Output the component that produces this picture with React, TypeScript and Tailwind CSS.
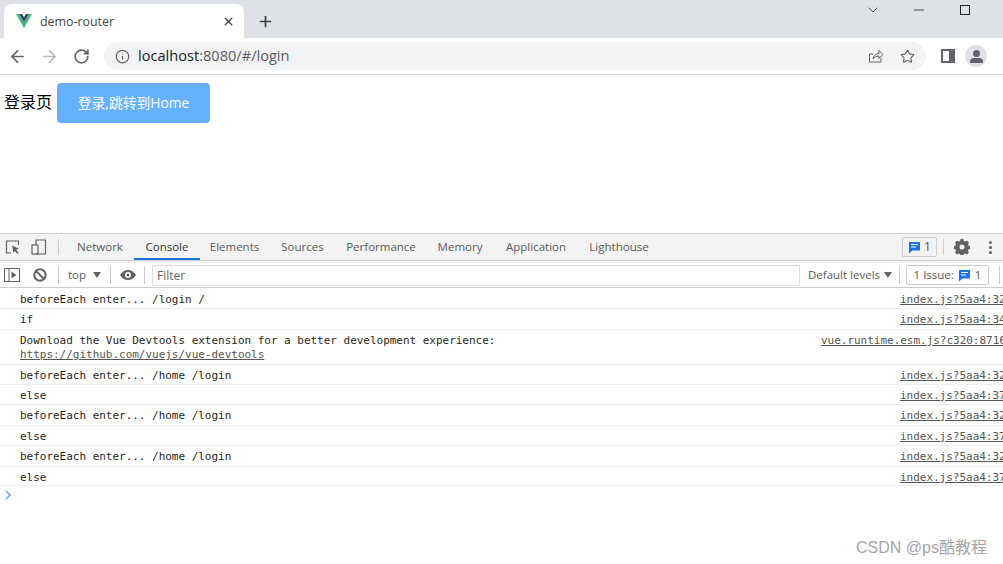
import { ArrowLeft, ArrowRight, ChevronDown, Info, Minus, Plus, RotateCw, Star, X } from "lucide-react";

const UI_FONT = "font-['Open_Sans','Noto_Sans_CJK_SC',sans-serif]";

const ROWS = [
  { text: "beforeEach enter... /login /", src: "index.js?5aa4:32", h: "h-[21px]" },
  { text: "if", src: "index.js?5aa4:34", h: "h-[21px]" },
  { text: "", src: "vue.runtime.esm.js?c320:8716", h: "h-[35px]", download: true },
  { text: "beforeEach enter... /home /login", src: "index.js?5aa4:32", h: "h-[20px]" },
  { text: "else", src: "index.js?5aa4:37", h: "h-[20px]" },
  { text: "beforeEach enter... /home /login", src: "index.js?5aa4:32", h: "h-[21px]" },
  { text: "else", src: "index.js?5aa4:37", h: "h-[20px]" },
  { text: "beforeEach enter... /home /login", src: "index.js?5aa4:32", h: "h-[21px]" },
  { text: "else", src: "index.js?5aa4:37", h: "h-[19px]" },
];

const TABS = [
  { label: "Network", w: "w-[68px]" },
  { label: "Console", w: "w-[66px]", active: true },
  { label: "Elements", w: "w-[69px]" },
  { label: "Sources", w: "w-[67px]" },
  { label: "Performance", w: "w-[90px]" },
  { label: "Memory", w: "w-[68px]" },
  { label: "Application", w: "w-[84px]" },
  { label: "Lighthouse", w: "w-[82px]" },
];

function Bubble() {
  return (
    <svg width="13" height="13" viewBox="0 0 13 13">
      <path d="M1 1h11v8.500H4.500L1 12.500z" fill="#1a73e8" />
      <path d="M3 3.500h7M3 6h5" stroke="#fff" strokeWidth="1.200" />
    </svg>
  );
}

function VueLogo() {
  return (
    <svg width="16" height="14" viewBox="0 0 16 14">
      <path d="M0 0h3.200L8 8.200 12.800 0H16L8 14z" fill="#41b883" />
      <path d="M3.200 0h2.900L8 3.300 9.900 0h2.900L8 8.200z" fill="#35495e" />
    </svg>
  );
}

function Divider() {
  return <div className="h-[18px] w-px bg-[#ccc]" />;
}

function Caret() {
  return <div className="h-0 w-0 border-x-[4px] border-t-[6px] border-x-transparent border-t-[#5f6368]" />;
}

export default function App() {
  return (
    <div className={`relative flex h-[564px] w-[1003px] flex-col overflow-hidden bg-white ${UI_FONT}`}>
      {/* Tab strip */}
      <div className="flex h-[38px] shrink-0 items-end bg-[#dee1e6] pl-[4px]">
        <div className="flex h-[34px] w-[240px] items-center rounded-t-[8px] bg-white pl-[12px] pr-[9px]">
          <VueLogo />
          <span className="ml-[8px] pt-[2px] text-[12.4px] text-[#45494d]">demo-router</span>
          <X className="ml-auto size-[13px] text-[#45494d]" strokeWidth={2.6} />
        </div>
        <div className="ml-[13px] flex h-[34px] items-center">
          <Plus className="size-[17px] text-[#3c4043]" strokeWidth={2.4} />
        </div>
        <div className="ml-auto flex h-[38px] items-start">
          <ChevronDown className="mt-[2px] size-[16px] text-[#3c4043]" strokeWidth={1.3} />
          <Minus className="ml-[30px] mt-[2px] size-[16px] text-[#222]" strokeWidth={1.2} />
          <div className="ml-[33px] mr-[33px] mt-[5px] size-[10px] border border-[#222]" />
        </div>
      </div>

      {/* Toolbar */}
      <div className="flex h-[37px] shrink-0 items-center border-b border-[#d4d5d7] bg-white">
        <ArrowLeft className="ml-[8px] size-[19px] text-[#5f6368]" strokeWidth={2.2} />
        <ArrowRight className="ml-[13px] size-[19px] text-[#b8babc]" strokeWidth={2.2} />
        <RotateCw className="ml-[14px] size-[17px] text-[#5f6368]" strokeWidth={2.4} />
        <div className="ml-[14px] flex h-[28px] w-[822px] items-center rounded-full bg-[#f1f3f4] pl-[11px] pr-[11px]">
          <Info className="size-[15px] text-[#5f6368]" strokeWidth={2} />
          <span className="ml-[8px] text-[14.6px] text-[#5a5c5f]">
            <span className="text-[#202124]">localhost</span>:8080/#/login
          </span>
          <svg className="ml-auto" width="16" height="16" viewBox="0 0 16 16" fill="none" stroke="#5f6368" strokeWidth="1">
            <path d="M13 10v4H1.500V6H5M5 11c.6-3.500 3-5.500 6-5.500V2.500L15 6.500l-4 4V8c-2.500 0-4.500.8-6 3z" />
          </svg>
          <Star className="ml-[16px] size-[15px] text-[#5f6368]" strokeWidth={1.8} />
        </div>
        <div className="ml-[15px] flex h-[14px] w-[14px] justify-end border-2 border-[#5f6368] bg-white">
          <div className="w-[4px] bg-[#5f6368]" />
        </div>
        <div className="ml-[10px] flex size-[22px] flex-col items-center justify-center rounded-full bg-[#dee1e6]">
          <div className="size-[7px] rounded-full bg-[#5f6368]" />
          <div className="mt-[1px] h-[5px] w-[13px] rounded-t-[4px] bg-[#5f6368]" />
        </div>
      </div>

      {/* Page */}
      <div className="flex h-[158px] shrink-0 items-start pl-[4px] pt-[8px]">
        <span className="mt-[10px] text-[16px] leading-[18px] text-black">登录页</span>
        <button
          type="button"
          className="ml-[5px] h-[40px] w-[153px] rounded-[4px] bg-[#66b1ff] text-[13.8px] text-white"
        >
          登录,跳转到Home
        </button>
      </div>

      {/* Devtools tabs */}
      <div className="flex h-[28px] shrink-0 items-center border-y border-[#cbcdd0] bg-[#f3f3f3] text-[11.5px] text-[#5a5a5a]">
        <svg className="ml-[5px]" width="16" height="16" viewBox="0 0 16 16" fill="none">
          <path d="M6 14H1.500V2h12v4" stroke="#5f6368" strokeWidth="1.200" />
          <path d="M7 6.500l7 3.200-3 1.100 2.500 2.700-1.300 1.200-2.400-2.800L8.500 14z" fill="#5f6368" />
        </svg>
        <svg className="ml-[10px]" width="16" height="16" viewBox="0 0 16 16" fill="none" stroke="#5f6368" strokeWidth="1.200">
          <path d="M5 6V1h9.500v14H5" />
          <rect x="1" y="6" width="6" height="9" />
        </svg>
        <div className="ml-[11px] mr-[7px] h-[16px] w-px bg-[#ccc]" />
        {TABS.map((t) => (
          <div
            key={t.label}
            className={`flex h-[26px] items-center justify-center ${t.w} ${
              t.active ? "border-b-2 border-[#1a73e8] pt-[2px] text-[#333]" : ""
            }`}
          >
            {t.label}
          </div>
        ))}
        <div className="ml-auto flex h-[20px] w-[35px] items-center justify-center gap-[3px] rounded-[2px] border border-[#ccc] text-[12px] text-[#555]">
          <Bubble />1
        </div>
        <div className="ml-[6px] h-[16px] w-px bg-[#ccc]" />
        <svg className="ml-[10px]" width="16" height="16" viewBox="0 0 16 16" fill="#5f6368">
          <path
            fillRule="evenodd"
            d="M6.500 0h3l.4 2 1.300.6 1.800-1.100 2 2.100-1.100 1.700.6 1.300 2 .4v3l-2 .4-.6 1.300 1.100 1.800-2 2-1.800-1.100-1.300.6-.4 2h-3l-.4-2-1.300-.6-1.800 1.100-2-2 1.100-1.800-.6-1.300-2-.4v-3l2-.4.6-1.300-1.100-1.700 2-2.100 1.800 1.100 1.300-.6zM8 5.500a2.500 2.500 0 1 0 0 5 2.500 2.500 0 0 0 0-5z"
          />
        </svg>
        <div className="ml-[19px] mr-[11px] flex flex-col gap-[2px]">
          <div className="size-[3px] rounded-full bg-[#5f6368]" />
          <div className="size-[3px] rounded-full bg-[#5f6368]" />
          <div className="size-[3px] rounded-full bg-[#5f6368]" />
        </div>
      </div>

      {/* Console filter bar */}
      <div className="flex h-[27px] shrink-0 items-center border-t-[2px] border-b border-t-[#f1f1f1] border-b-[#cbcdd0] bg-white text-[11.5px] text-[#5a5a5a]">
        <svg className="ml-[4px]" width="16" height="14" viewBox="0 0 16 14" fill="none">
          <rect x="0.500" y="0.500" width="15" height="13" stroke="#5f6368" />
          <path d="M5 .5v13" stroke="#5f6368" />
          <path d="M7.500 3.500l5 3.500-5 3.500z" fill="#5f6368" />
        </svg>
        <svg className="ml-[13px]" width="14" height="14" viewBox="0 0 14 14" fill="none" stroke="#5f6368" strokeWidth="2">
          <circle cx="7" cy="7" r="5.700" />
          <path d="M3 3l8 8" />
        </svg>
        <div className="ml-[11px] mr-[9px]">
          <Divider />
        </div>
        <div className="w-[18px]">top</div>
        <div className="ml-[7px]">
          <Caret />
        </div>
        <div className="ml-[9px] mr-[9px]">
          <Divider />
        </div>
        <svg width="16" height="12" viewBox="0 0 16 12" fill="#5f6368">
          <path
            fillRule="evenodd"
            d="M8 1c3.500 0 6.300 2 8 5-1.700 3-4.500 5-8 5S1.700 9 0 6c1.700-3 4.500-5 8-5zm0 2a3 3 0 1 0 0 6 3 3 0 0 0 0-6z"
          />
          <circle cx="8" cy="6" r="1.500" />
        </svg>
        <div className="ml-[8px] mr-[7px]">
          <Divider />
        </div>
        <div className="flex h-[21px] w-[648px] items-center border border-[#ddd] pl-[4px] pt-[1px] text-[12px] text-[#666]">
          Filter
        </div>
        <div className="ml-[8px] w-[71px] whitespace-nowrap">Default levels</div>
        <div className="ml-[5px]">
          <Caret />
        </div>
        <div className="ml-[7px] mr-[6px]">
          <Divider />
        </div>
        <div className="flex h-[20px] w-[83px] items-center justify-center gap-[4px] rounded-[2px] border border-[#ccc] text-[#555]">
          1 Issue:
          <Bubble />1
        </div>
        <div className="ml-[10px]">
          <Divider />
        </div>
      </div>

      {/* Console rows */}
      <div className="flex flex-col font-['DejaVu_Sans_Mono',monospace] text-[11px] leading-[14px] tracking-[-0.02px] text-[#1f1f1f]">
        {ROWS.map((r, i) => (
          <div key={i} className={`flex shrink-0 border-b border-[#efefef] pl-[20px] pt-[4px] first:pt-[5px] ${r.h}`}>
            <div className="min-w-0 flex-1 whitespace-pre">
              {r.download ? (
                <>
                  <div>Download the Vue Devtools extension for a better development experience:</div>
                  <div className="text-[#555] underline">https://github.com/vuejs/vue-devtools</div>
                </>
              ) : (
                r.text
              )}
            </div>
            <div
              className={`shrink-0 overflow-hidden whitespace-nowrap text-[#555] underline ${
                r.download ? "w-[182px]" : "w-[103px]"
              }`}
            >
              {r.src}
            </div>
          </div>
        ))}
        <div className="pl-[4px] pt-[4px]">
          <svg width="8" height="10" viewBox="0 0 8 10" fill="none" stroke="#6aa2f4" strokeWidth="1.500">
            <path d="M2 1l4 4-4 4" />
          </svg>
        </div>
      </div>

      {/* Watermark */}
      <div className="absolute left-[856px] top-[538px] font-['Liberation_Sans','Noto_Sans_CJK_SC',sans-serif] text-[16px] leading-[20px] text-[#a5a5a5]">
        CSDN @ps酷教程
      </div>
    </div>
  );
}
